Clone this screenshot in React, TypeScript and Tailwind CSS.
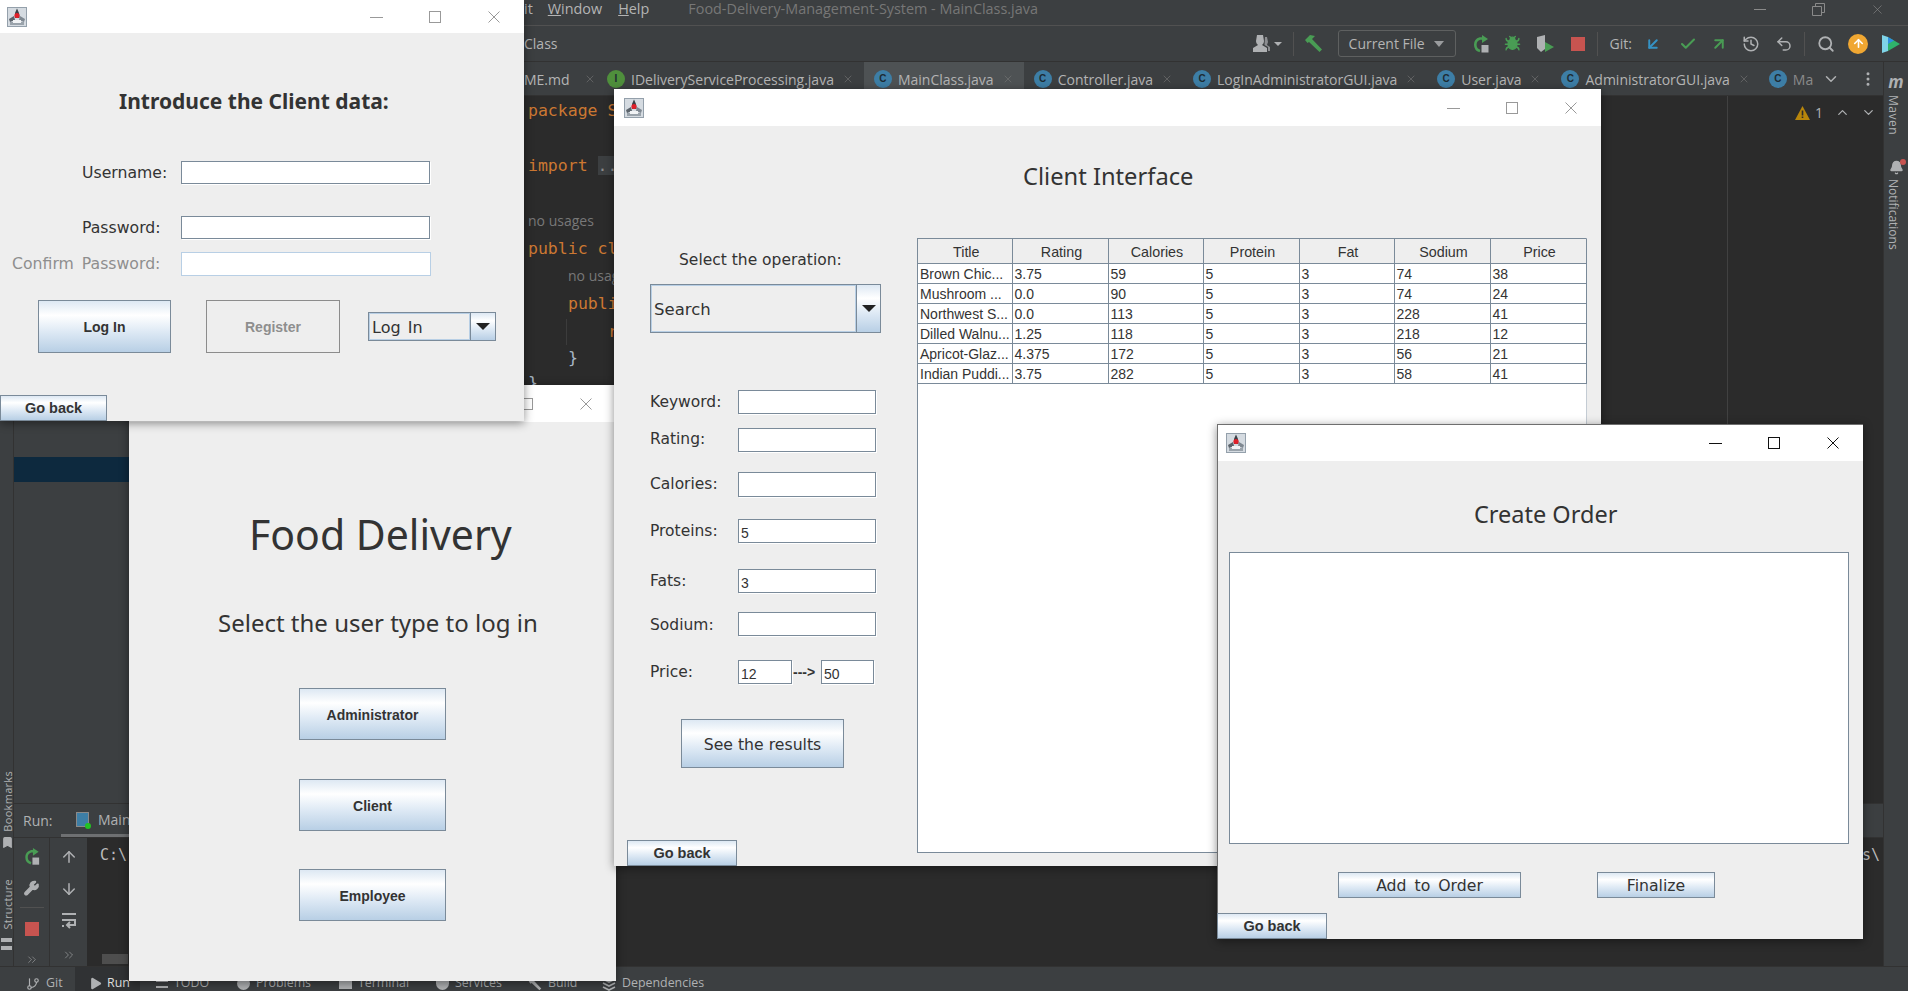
import React from 'react';
import {
  ArrowDown,
  ArrowDownLeft,
  ArrowUp,
  ArrowUpRight,
  Bell,
  Bookmark,
  Bug,
  Check,
  ChevronDown,
  ChevronUp,
  ChevronsRight,
  GitBranch,
  History,
  MoreVertical,
  Play,
  Search,
  Undo2,
  Wrench,
  X,
} from 'lucide-react';

const sans = "font-['Open_Sans',sans-serif]";
const tahoma = "font-['Noto_Sans',sans-serif]";
const dejavu = "font-['DejaVu_Sans',sans-serif]";
const arial = "font-['Liberation_Sans',sans-serif]";
const metalGradient = 'bg-[linear-gradient(180deg,#dde8f3_0%,#ffffff_28%,#dce8f4_62%,#b8cfe5_100%)]';

const rows = [
  ['Brown Chic...', '3.75', '59', '5', '3', '74', '38'],
  ['Mushroom ...', '0.0', '90', '5', '3', '74', '24'],
  ['Northwest S...', '0.0', '113', '5', '3', '228', '41'],
  ['Dilled Walnu...', '1.25', '118', '5', '3', '218', '12'],
  ['Apricot-Glaz...', '4.375', '172', '5', '3', '56', '21'],
  ['Indian Puddi...', '3.75', '282', '5', '3', '58', '41'],
];

const columns = ['Title', 'Rating', 'Calories', 'Protein', 'Fat', 'Sodium', 'Price'];
const columnWidths = ['w-[94px]', 'w-[96px]', 'w-[95px]', 'w-[96px]', 'w-[95px]', 'w-[96px]', 'w-[96px]'];

// the default Java window icon, just blurred shapes at this size
const JavaIcon = () => (
  <svg width="20" height="20" viewBox="0 0 20 20" className="shrink-0">
    <rect x="0" y="0" width="20" height="20" fill="#d5dbe1" />
    <rect x="0.5" y="0.5" width="19" height="19" fill="none" stroke="#94a0ab" />
    <path d="M10 1.5 L12 6 L12.5 11 L8 11 L8 6 Z" fill="#3b4046" />
    <path d="M2 12 L7 9 L8 13 L3 15 Z" fill="#5b636b" />
    <path d="M18 12 L13 9 L12 13 L17 15 Z" fill="#7f8891" />
    <path d="M3 15 H17 V18 H3 Z" fill="#9aa3ab" />
    <path d="M6 13 H14 V16 H6 Z" fill="#f1f3f5" />
    <circle cx="10" cy="8.5" r="2.6" fill="#e0202a" />
  </svg>
);

const WindowControls = ({ active }: { active?: boolean }) => {
  const stroke = active ? '#111111' : '#999999';
  return (
    <div className="flex items-center pr-[24px]">
      <svg width="13" height="12" viewBox="0 0 13 12">
        <path d="M0 6.5 H13" stroke={stroke} />
      </svg>
      <svg width="12" height="12" viewBox="0 0 12 12" className="ml-[46px]">
        <rect x="0.5" y="0.5" width="11" height="11" fill="none" stroke={stroke} />
      </svg>
      <svg width="12" height="12" viewBox="0 0 12 12" className="ml-[47px]">
        <path d="M0.5 0.5 L11.5 11.5 M11.5 0.5 L0.5 11.5" stroke={stroke} />
      </svg>
    </div>
  );
};

const JavaWindow = ({
  className,
  barClass,
  active,
  children,
}: {
  className: string;
  barClass: string;
  active?: boolean;
  children: React.ReactNode;
}) => (
  <div className={`absolute flex flex-col bg-[#eeeeee] text-[#333333] shadow-[0_2px_9px_rgba(0,0,0,0.45)] ${className}`}>
    <div className={`flex shrink-0 items-center justify-between bg-white ${barClass}`}>
      <JavaIcon />
      <WindowControls active={active} />
    </div>
    {children}
  </div>
);

const MetalButton = ({ className, children }: { className: string; children: React.ReactNode }) => (
  <button className={`flex shrink-0 items-center justify-center border border-[#7a8a99] text-[#333333] ${metalGradient} ${className}`}>
    {children}
  </button>
);

const GoBack = ({ className }: { className: string }) => (
  <MetalButton className={`mt-auto h-[26px] pt-[2px] ${arial} text-[14.5px] font-bold ${className}`}>Go back</MetalButton>
);

const Field = ({ value = '', className = 'w-[138px]', height = 'h-[24px]' }: { value?: string; className?: string; height?: string }) => (
  <input
    readOnly
    value={value}
    className={`shrink-0 border border-[#7a8a99] bg-white pl-[2px] pt-[3px] shadow-[1px_1px_0_#ffffff] outline-none ${arial} text-[14px] text-[#333333] ${height} ${className}`}
  />
);

const Combo = ({ label, className, textClass, arrowClass }: { label: string; className: string; textClass: string; arrowClass: string }) => (
  <div className={`flex shrink-0 border border-[#7a8a99] ${className}`}>
    <div className={`flex flex-1 items-center border border-[#b8cfe5] pl-[2px] pt-[2px] ${dejavu} text-[#333333] ${textClass}`}>{label}</div>
    <div className={`flex items-center justify-center border-l border-[#7a8a99] ${metalGradient} ${arrowClass}`}>
      <span className="h-0 w-0 border-x-[7px] border-t-[7px] border-x-transparent border-t-[#222222]" />
    </div>
  </div>
);

const FilterRow = ({
  label,
  className,
  labelClass = '',
  children,
}: {
  label: string;
  className: string;
  labelClass?: string;
  children: React.ReactNode;
}) => (
  <div className={`flex items-center ${className}`}>
    <span className={`w-[88px] shrink-0 ${dejavu} text-[15.5px] leading-[20px] ${labelClass}`}>{label}</span>
    {children}
  </div>
);

const LoginWindow = () => (
  <JavaWindow className="left-0 top-0 z-30 h-[421px] w-[524px]" barClass="h-[33px] pl-[7px]">
    <h2 className={`ml-[119px] mt-[53px] h-[30px] ${tahoma} text-[21px] font-bold leading-[30px]`}>Introduce the Client data:</h2>
    <div className="mt-[45px] flex items-center">
      <span className={`w-[181px] pl-[82px] ${dejavu} text-[15.7px] leading-[22px]`}>Username:</span>
      <Field className="w-[249px]" height="h-[23px]" />
    </div>
    <div className="mt-[32px] flex items-center">
      <span className={`w-[181px] pl-[82px] ${dejavu} text-[15.7px] leading-[22px]`}>Password:</span>
      <Field className="w-[249px]" height="h-[23px]" />
    </div>
    <div className="mt-[13px] flex items-center">
      <span className={`w-[181px] pl-[12px] ${dejavu} text-[15.7px] leading-[22px] text-[#8e8e8e] [word-spacing:3px]`}>Confirm Password:</span>
      <div className="h-[24px] w-[250px] border border-[#b8cfe5] bg-white" />
    </div>
    <div className="mt-[24px] flex items-center pl-[38px]">
      <MetalButton className={`h-[53px] w-[133px] pt-[2px] ${arial} text-[14px] font-bold`}>Log In</MetalButton>
      <button className={`ml-[35px] h-[53px] w-[134px] border border-[#8c8c8c] pt-[2px] ${arial} text-[14px] font-bold text-[#8e8e8e]`}>Register</button>
      <Combo label="Log In" className="ml-[28px] h-[29px] w-[128px]" textClass="text-[16px] [word-spacing:2px]" arrowClass="w-[25px]" />
    </div>
    <GoBack className="w-[107px]" />
  </JavaWindow>
);

const FoodDeliveryWindow = () => (
  <JavaWindow className="left-[129px] top-[385px] z-10 h-[596px] w-[487px]" barClass="h-[37px] pl-[10px]">
    <h1 className={`ml-[120px] mt-[87px] h-[50px] ${tahoma} text-[41px] leading-[50px]`}>Food Delivery</h1>
    <h3 className={`ml-[89px] mt-[46px] h-[36px] ${tahoma} text-[24px] leading-[36px]`}>Select the user type to log in</h3>
    <MetalButton className={`ml-[170px] mt-[47px] h-[52px] w-[147px] pt-[2px] ${arial} text-[14px] font-bold`}>Administrator</MetalButton>
    <MetalButton className={`ml-[170px] mt-[39px] h-[52px] w-[147px] pt-[2px] ${arial} text-[14px] font-bold`}>Client</MetalButton>
    <MetalButton className={`ml-[170px] mt-[38px] h-[52px] w-[147px] pt-[2px] ${arial} text-[14px] font-bold`}>Employee</MetalButton>
  </JavaWindow>
);

const ClientWindow = () => (
  <JavaWindow className="left-[614px] top-[89px] z-20 h-[777px] w-[987px]" barClass="h-[37px] pl-[10px]">
    <h2 className={`ml-[409px] mt-[32px] h-[36px] ${tahoma} text-[23.7px] leading-[36px]`}>Client Interface</h2>
    <div className="mt-[44px] flex">
      <div className="flex h-[628px] w-[303px] flex-col pl-[36px]">
        <span className={`ml-[29px] mt-[11px] h-[22px] ${dejavu} text-[15.5px] leading-[22px]`}>Select the operation:</span>
        <Combo label="Search" className="mt-[13px] h-[49px] w-[231px]" textClass="pt-[4px] text-[16.5px]" arrowClass="w-[24px]" />
        <FilterRow label="Keyword:" className="mt-[57px]"><Field /></FilterRow>
        <FilterRow label="Rating:" labelClass="-mt-[2px]" className="mt-[14px]"><Field /></FilterRow>
        <FilterRow label="Calories:" labelClass="-mt-[2px]" className="mt-[20px]"><Field height="h-[25px]" /></FilterRow>
        <FilterRow label="Proteins:" className="mt-[22px]"><Field value="5" /></FilterRow>
        <FilterRow label="Fats:" className="mt-[26px]"><Field value="3" /></FilterRow>
        <FilterRow label="Sodium:" labelClass="pt-[2px]" className="mt-[19px]"><Field /></FilterRow>
        <FilterRow label="Price:" className="mt-[24px]">
          <Field value="12" className="w-[54px]" />
          <span className={`w-[29px] pl-[1px] ${arial} text-[14px] font-bold`}>---&gt;</span>
          <Field value="50" className="w-[53px]" />
        </FilterRow>
        <MetalButton className={`ml-[31px] mt-[35px] h-[49px] w-[163px] pt-[3px] ${dejavu} text-[15.7px]`}>See the results</MetalButton>
        <GoBack className="-ml-[23px] w-[110px]" />
      </div>
      <div className="h-[615px] w-[670px] border border-[#7a8a99] border-r-[#c4ccd4] bg-white">
        <table className={`w-[668px] table-fixed border-collapse ${arial} text-[14px] text-[#333333]`}>
          <colgroup>
            {columnWidths.map((w, i) => (
              <col key={i} className={w} />
            ))}
          </colgroup>
          <thead>
            <tr className="h-[24px] bg-[#eeeeee]">
              {columns.map((c) => (
                <th key={c} className="border-b border-r border-[#7a8a99] pl-[3px] pt-[3px] text-center text-[14.3px] font-normal">{c}</th>
              ))}
            </tr>
          </thead>
          <tbody>
            {rows.map((r) => (
              <tr key={r[0]} className="h-[20px]">
                {r.map((cell, i) => (
                  <td key={i} className="overflow-hidden whitespace-nowrap border-b border-r border-[#7a8a99] pl-[2px] pt-[1px] leading-[18px]">{cell}</td>
                ))}
              </tr>
            ))}
          </tbody>
        </table>
      </div>
    </div>
  </JavaWindow>
);

const OrderWindow = () => (
  <JavaWindow className="left-[1217px] top-[424px] z-40 h-[515px] w-[646px] border-l border-t border-[#6f6f6f]" barClass="h-[36px] pl-[8px]" active>
    <h2 className={`ml-[256px] mt-[36px] h-[34px] ${tahoma} text-[23.5px] leading-[34px]`}>Create Order</h2>
    <div className="ml-[11px] mt-[21px] h-[292px] w-[620px] border border-[#7a8a99] bg-white" />
    <div className="mt-[28px] flex pl-[120px]">
      <MetalButton className={`h-[26px] w-[183px] pt-[2px] ${dejavu} text-[15.7px] [word-spacing:3px]`}>Add to Order</MetalButton>
      <MetalButton className={`ml-[76px] h-[26px] w-[118px] pt-[2px] ${dejavu} text-[15.7px]`}>Finalize</MetalButton>
    </div>
    <GoBack className="-ml-px w-[110px]" />
  </JavaWindow>
);

const FileBadge = ({ letter, color }: { letter: string; color: string }) => (
  <span className={`flex h-[18px] w-[18px] shrink-0 items-center justify-center rounded-full ${arial} text-[10px] font-bold text-[#1d2b33] ${color}`}>{letter}</span>
);

const EditorTab = ({ name, letter, color, active }: { name: string; letter: string; color: string; active?: boolean }) => (
  <div className={`flex h-full shrink-0 items-center pl-[10px] pr-[10px] ${active ? 'bg-[#4e5254]' : ''}`}>
    <FileBadge letter={letter} color={color} />
    <span className="ml-[6px] pt-[1px]">{name}</span>
    <X size={12} strokeWidth={1.2} className="ml-[8px] text-[#777777]" />
  </div>
);

const Separator = ({ className }: { className: string }) => <span className={`h-[24px] w-px bg-[#515151] ${className}`} />;

const RerunIcon = () => (
  <svg width="17" height="18" viewBox="0 0 17 18" fill="none">
    <path d="M8 16 A6.5 6.5 0 0 1 8 3.5 H11" stroke="#499c54" strokeWidth="2.6" />
    <path d="M10 0 L16 4 L10 8 Z" fill="#499c54" />
    <rect x="9.5" y="10" width="7" height="7.5" fill="#afb1b3" />
  </svg>
);

const TopBars = () => (
  <>
    <div className={`flex h-[26px] shrink-0 items-center border-b border-[#515151] pb-[7px] pl-[524px] ${sans} text-[14.4px] text-[#b4b4b4]`}>
      <span>it</span>
      <span className="ml-[15px]"><u>W</u>indow</span>
      <span className="ml-[16px]"><u>H</u>elp</span>
      <span className="ml-[39px] text-[#777777]">Food-Delivery-Management-System - MainClass.java</span>
      <div className="ml-auto flex items-center pr-[23px] text-[#8a8a8a]">
        <span className="h-px w-[12px] bg-[#8a8a8a]" />
        <svg width="13" height="13" viewBox="0 0 13 13" className="ml-[46px]" fill="none" stroke="#8a8a8a">
          <path d="M3.5 3 V0.5 H12.5 V9.5 H10 M0.5 3.5 H9.5 V12.5 H0.5 Z" />
        </svg>
        <X size={15} strokeWidth={1} className="ml-[45px]" />
      </div>
    </div>
    <div className={`flex h-[36px] shrink-0 items-center border-b border-[#323232] pl-[524px] pr-[8px] ${sans} text-[14px] text-[#b4b4b4]`}>
      <span>Class</span>
      <div className="ml-auto flex items-center">
        <span className="flex w-[31px] items-center">
          <svg width="20" height="20" viewBox="0 0 20 20" fill="#afb1b3">
            <path d="M5 1 H11 L12 7 C12 9 11 10 10 11 L15 14 V18 H1 V14 L6 11 C5 10 4 9 4 7 Z" />
            <path d="M13 3 H15 L16 8 L15 11 L18 13 V17 H16 V13 L12.5 11 Z" opacity="0.7" />
          </svg>
          <span className="ml-[2px] h-0 w-0 border-x-[4px] border-t-[4px] border-x-transparent border-t-[#afb1b3]" />
        </span>
        <Separator className="ml-[10px]" />
        <svg width="19" height="19" viewBox="0 0 19 19" className="ml-[10px]" fill="#499c54">
          <path d="M1 6 L6 1 L11 2 L8 5 L18 15.5 L15.5 18 L5 8 L3.5 9 Z" />
        </svg>
        <div className="ml-[15px] flex h-[27px] w-[118px] items-center rounded-[3px] border border-[#5e6060] pl-[10px]">
          Current File
          <span className="ml-[9px] h-0 w-0 border-x-[5px] border-t-[6px] border-x-transparent border-t-[#9a9c9e]" />
        </div>
        <span className="ml-[16px]"><RerunIcon /></span>
        <Bug size={17} className="ml-[15px] text-[#499c54]" fill="#499c54" strokeWidth={2} />
        <span className="ml-[15px] flex w-[19px] items-center">
          <svg width="19" height="18" viewBox="0 0 19 18">
            <path d="M1 2 L9 0 V14 L5 17 L1 13 Z" fill="#afb1b3" />
            <path d="M9 7 L18 12 L9 17 Z" fill="#499c54" />
          </svg>
        </span>
        <span className="ml-[16px] h-[14px] w-[14px] bg-[#c75450]" />
        <Separator className="ml-[12px]" />
        <span className="ml-[12px]">Git:</span>
        <ArrowDownLeft size={18} className="ml-[12px] text-[#3592c4]" strokeWidth={2.6} />
        <Check size={18} className="ml-[17px] text-[#499c54]" strokeWidth={2.8} />
        <ArrowUpRight size={18} className="ml-[13px] text-[#499c54]" strokeWidth={2.6} />
        <History size={18} className="ml-[14px] text-[#afb1b3]" strokeWidth={2} />
        <Undo2 size={18} className="ml-[15px] text-[#afb1b3]" strokeWidth={2} />
        <Separator className="ml-[11px]" />
        <Search size={18} className="ml-[12px] text-[#afb1b3]" strokeWidth={2.4} />
        <span className="ml-[13px] flex h-[20px] w-[20px] items-center justify-center rounded-full bg-[#f0a732]">
          <ArrowUp size={13} className="text-white" strokeWidth={3} />
        </span>
        <svg width="18" height="20" viewBox="0 0 18 20" className="ml-[14px]">
          <path d="M0 1 L6 3 V17 L0 19 Z" fill="#7fd4e8" />
          <path d="M6 3 L18 10 L6 17 Z" fill="#2fb36b" />
          <path d="M6 3 L12 6.5 L6 10 Z" fill="#2f8fe0" />
        </svg>
      </div>
    </div>
  </>
);

const TabsBar = () => (
  <div className={`flex h-[34px] shrink-0 items-center border-b border-[#323232] pl-[524px] ${sans} text-[14px] text-[#b4b4b4]`}>
    <div className="flex h-full w-[73px] shrink-0 items-center pt-[1px]">
      ME.md
      <X size={12} strokeWidth={1.2} className="ml-[14px] text-[#777777]" />
    </div>
    <EditorTab name="IDeliveryServiceProcessing.java" letter="I" color="bg-[#4f8f3c]" />
    <EditorTab name="MainClass.java" letter="C" color="bg-[#3d7ea6]" active />
    <EditorTab name="Controller.java" letter="C" color="bg-[#3d7ea6]" />
    <EditorTab name="LogInAdministratorGUI.java" letter="C" color="bg-[#3d7ea6]" />
    <EditorTab name="User.java" letter="C" color="bg-[#3d7ea6]" />
    <EditorTab name="AdministratorGUI.java" letter="C" color="bg-[#3d7ea6]" />
    <div className="flex h-full w-[62px] shrink-0 items-center overflow-hidden pl-[9px]">
      <FileBadge letter="C" color="bg-[#3d7ea6]" />
      <span className="ml-[6px] pt-[1px] text-[#8a8a8a]">Ma</span>
    </div>
    <ChevronDown size={18} className="text-[#afb1b3]" />
    <MoreVertical size={18} className="ml-[19px] text-[#afb1b3]" />
  </div>
);

const CodePane = () => (
  <div className="flex min-w-0 flex-1 bg-[#2b2b2b]">
    <div className="w-[1204px] shrink-0 border-r border-[#414141] pl-[4px] pt-[2px] font-['DejaVu_Sans_Mono',monospace] text-[16.5px] leading-[26px] text-[#cc7832]">
      <div>package S</div>
      <div className="mt-[29px]">import <span className="bg-[#3c3f41] text-[#8a8a8a]">..</span></div>
      <div className={`mt-[29px] ${sans} text-[14px] text-[#787878]`}>no usages</div>
      <div className="mt-[2px]">public cl</div>
      <div className={`ml-[40px] mt-[1px] ${sans} text-[14px] text-[#787878]`}>no usages</div>
      <div className="ml-[40px] mt-[2px]">public</div>
      <div className="ml-[38px] mt-[2px] border-l border-[#3c3c3c] pl-[41px]">r</div>
      <div className="ml-[40px] text-[#a9b7c6]">{'}'}</div>
      <div className="-mt-[1px] text-[#a9b7c6]">{'}'}</div>
    </div>
    <div className={`flex h-[33px] flex-1 items-center pl-[67px] ${sans} text-[14px] text-[#afb1b3]`}>
      <svg width="15" height="14" viewBox="0 0 15 14">
        <path d="M7.5 0 L15 14 H0 Z" fill="#b8860b" />
        <path d="M6.7 4.5 H8.3 V9.5 H6.7 Z M6.7 10.5 H8.3 V12 H6.7 Z" fill="#2b2b2b" />
      </svg>
      <span className="ml-[5px]">1</span>
      <ChevronUp size={15} className="ml-[12px]" />
      <ChevronDown size={15} className="ml-[11px]" />
    </div>
  </div>
);

const RunPanel = () => (
  <div className={`flex h-[163px] shrink-0 flex-col border-t border-[#323232] ${sans} text-[14px] text-[#afb1b3]`}>
    <div className="flex h-[34px] shrink-0 items-center border-b border-[#323232] pl-[9px]">
      <span>Run:</span>
      <div className="ml-[8px] flex h-full w-[70px] items-center border-b-[3px] border-[#6e7072] pl-[15px]">
        <span className="relative h-[15px] w-[15px] border border-[#8a8a8a] bg-[#3d7ea6]">
          <span className="absolute -bottom-[3px] -right-[3px] h-[6px] w-[6px] rounded-full bg-[#22c322]" />
        </span>
        <span className="ml-[9px]">Main</span>
      </div>
    </div>
    <div className="flex min-h-0 flex-1">
      <div className="flex w-[36px] shrink-0 flex-col items-center border-r border-[#323232] pt-[10px]">
        <RerunIcon />
        <Wrench size={17} className="mt-[15px] text-[#afb1b3]" fill="#afb1b3" />
        <span className="mt-[11px] h-px w-[24px] bg-[#515151]" />
        <span className="mt-[14px] h-[14px] w-[14px] bg-[#c75450]" />
        <ChevronsRight size={14} strokeWidth={1} className="mt-[17px]" />
      </div>
      <div className="flex w-[37px] shrink-0 flex-col items-center pt-[10px]">
        <ArrowUp size={18} />
        <ArrowDown size={18} className="mt-[14px]" />
        <svg width="14" height="18" viewBox="0 0 14 18" className="mt-[14px]" fill="none" stroke="#afb1b3" strokeWidth="2">
          <path d="M0 2 H14 M0 8 H13 V13 H6 M8 10 L5 13 L8 16 M0 14 H2" />
        </svg>
        <ChevronsRight size={14} strokeWidth={1} className="mt-[18px]" />
      </div>
      <div className="flex flex-1 flex-col bg-[#2b2b2b] pt-[6px]">
        <div className="flex justify-between pl-[13px] pr-[3px] font-['DejaVu_Sans_Mono',monospace] text-[15px] text-[#bbbbbb]">
          <span>C:\</span>
          <span>s\</span>
        </div>
        <span className="mb-[2px] ml-[15px] mt-auto h-[10px] w-[26px] bg-[#4e4e4e]" />
      </div>
    </div>
  </div>
);

const StatusItem = ({ name, className, children }: { name: string; className: string; children: React.ReactNode }) => (
  <div className={`flex items-center ${className}`}>
    {children}
    <span className="ml-[6px]">{name}</span>
  </div>
);

const StatusBar = () => (
  <div className={`flex h-[25px] shrink-0 items-center border-t border-[#323232] pl-[26px] pt-[9px] ${sans} text-[12.4px] text-[#afb1b3]`}>
    <StatusItem name="Git" className="w-[49px]"><GitBranch size={14} /></StatusItem>
    <div className="-mt-[9px] flex h-[25px] w-[65px] items-center bg-[#303234] pl-[13px] pt-[9px] text-[#dddddd]">
      <Play size={15} fill="#afb1b3" strokeWidth={0} />
      <span className="ml-[4px]">Run</span>
    </div>
    <StatusItem name="TODO" className="ml-[16px] w-[81px]"><span className="h-[8px] w-[12px] border-y-2 border-[#afb1b3]" /></StatusItem>
    <StatusItem name="Problems" className="w-[102px]"><span className="h-[13px] w-[13px] rounded-full bg-[#afb1b3]" /></StatusItem>
    <StatusItem name="Terminal" className="w-[97px]"><span className="h-[10px] w-[13px] bg-[#afb1b3]" /></StatusItem>
    <StatusItem name="Services" className="w-[92px]"><span className="h-[13px] w-[13px] rounded-b-full bg-[#afb1b3]" /></StatusItem>
    <StatusItem name="Build" className="w-[74px]">
      <svg width="14" height="14" viewBox="0 0 19 19" fill="#afb1b3">
        <path d="M1 6 L6 1 L11 2 L8 5 L18 15.5 L15.5 18 L5 8 L3.5 9 Z" />
      </svg>
    </StatusItem>
    <StatusItem name="Dependencies" className="">
      <svg width="14" height="14" viewBox="0 0 14 14" fill="none" stroke="#afb1b3" strokeWidth="1.6">
        <path d="M1 2 L7 5 L13 2 M1 6 L7 9 L13 6 M1 10 L7 13 L13 10" />
      </svg>
    </StatusItem>
  </div>
);

const App = () => (
  <div className="relative flex h-[991px] w-[1908px] flex-col overflow-hidden bg-[#3c3f41]">
    <TopBars />
    <div className="flex min-h-0 flex-1">
      <div className="flex min-w-0 flex-1 flex-col">
        <TabsBar />
        <div className="flex min-h-0 flex-1">
          <div className={`flex w-[14px] shrink-0 flex-col items-start justify-end border-r border-[#323232] pb-[16px] ${sans} text-[11px] leading-[15px] tracking-[0.3px] text-[#afb1b3]`}>
            <span className="rotate-180 [writing-mode:vertical-rl]">Bookmarks</span>
            <Bookmark size={13} className="ml-px mt-[5px]" fill="#afb1b3" />
            <span className="mt-[30px] rotate-180 [writing-mode:vertical-rl]">Structure</span>
            <span className="ml-px mt-[8px] h-[12px] w-[11px] border-y-[4px] border-[#afb1b3]" />
          </div>
          <div className="flex min-w-0 flex-1 flex-col">
            <div className="flex min-h-0 flex-1">
              <div className="w-[510px] shrink-0 pt-[361px]">
                <div className="h-[25px] bg-[#0d293e]" />
              </div>
              <CodePane />
            </div>
            <RunPanel />
          </div>
        </div>
      </div>
      <div className={`flex w-[25px] shrink-0 flex-col items-center border-l border-[#323232] pt-[10px] ${sans} text-[12px] text-[#afb1b3]`}>
        <span className="text-[17px] font-bold italic leading-[20px]">m</span>
        <span className="mr-[6px] mt-[3px] tracking-[0.5px] [writing-mode:vertical-rl]">Maven</span>
        <div className="relative mt-[25px]">
          <Bell size={15} fill="#afb1b3" />
          <span className="absolute -right-[2px] -top-[1px] h-[6px] w-[6px] rounded-full bg-[#c75450]" />
        </div>
        <span className="mr-[6px] mt-[4px] [writing-mode:vertical-rl]">Notifications</span>
      </div>
    </div>
    <StatusBar />
    <FoodDeliveryWindow />
    <ClientWindow />
    <LoginWindow />
    <OrderWindow />
  </div>
);

export default App;
